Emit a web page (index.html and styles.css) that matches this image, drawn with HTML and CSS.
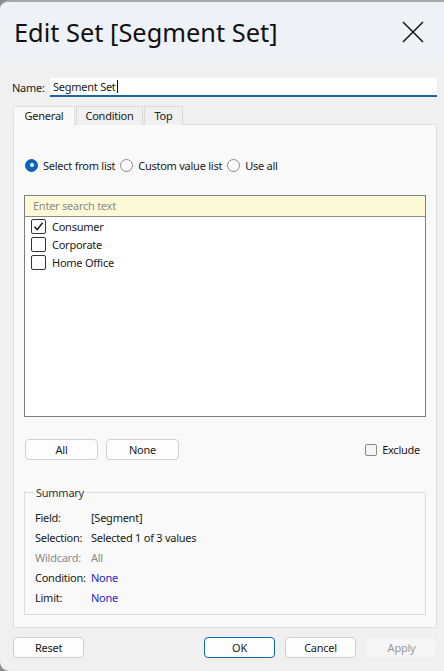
FILE: index.html
```html
<!DOCTYPE html>
<html>
<head>
<meta charset="utf-8">
<link rel="stylesheet" href="styles.css">
</head>
<body>
<div class="window">
  <div class="titlebar">
    <h1 class="title">Edit Set [Segment Set]</h1>
    <svg class="close" width="22" height="22" viewBox="0 0 22 22"><path d="M1 1L21 21M21 1L1 21" stroke="#1a1a1a" stroke-width="1.6" fill="none"/></svg>
  </div>
  <div class="content">
    <div class="name-row">
      <span class="name-label">Name:</span>
      <div class="name-input">Segment Set<span class="caret"></span></div>
    </div>
    <div class="tabs">
      <div class="tab active">General</div>
      <div class="tab">Condition</div>
      <div class="tab">Top</div>
    </div>
    <div class="panel">
      <div class="radios">
        <span class="radio checked"></span><span class="rlabel">Select from list</span>
        <span class="radio"></span><span class="rlabel">Custom value list</span>
        <span class="radio"></span><span class="rlabel">Use all</span>
      </div>
      <div class="listbox">
        <div class="search">Enter search text</div>
        <div class="items">
          <div class="item"><span class="check on"><svg width="13" height="13" viewBox="0 0 13 13"><path d="M2.5 6.8L5.2 9.6L10.6 2.8" stroke="#1a1a1a" stroke-width="1.5" fill="none"/></svg></span>Consumer</div>
          <div class="item"><span class="check"></span>Corporate</div>
          <div class="item"><span class="check"></span>Home Office</div>
        </div>
      </div>
      <div class="actions">
        <button class="btn">All</button>
        <button class="btn">None</button>
        <span class="spacer"></span>
        <span class="exclude"><span class="xbox"></span>Exclude</span>
      </div>
      <fieldset class="summary">
        <legend>Summary</legend>
        <div class="srow"><span class="sl">Field:</span><span>[Segment]</span></div>
        <div class="srow"><span class="sl">Selection:</span><span>Selected 1 of 3 values</span></div>
        <div class="srow dim"><span class="sl">Wildcard:</span><span>All</span></div>
        <div class="srow"><span class="sl">Condition:</span><span class="link">None</span></div>
        <div class="srow"><span class="sl">Limit:</span><span class="link">None</span></div>
      </fieldset>
    </div>
    <div class="footer">
      <button class="btn fbtn">Reset</button>
      <span class="spacer"></span>
      <button class="btn fbtn primary">OK</button>
      <button class="btn fbtn">Cancel</button>
      <button class="btn fbtn disabled">Apply</button>
    </div>
  </div>
</div>
</body>
</html>
```
FILE: styles.css
```css
* { box-sizing: border-box; }
html, body { margin: 0; padding: 0; }
body {
  width: 444px;
  height: 671px;
  background: #8c8c8c;
  font-family: "Segoe UI", "Noto Sans", "Open Sans", sans-serif;
  font-size: 11px;
  letter-spacing: -0.25px;
  color: #1a1a1a;
  overflow: hidden;
}
.window {
  width: 444px;
  height: 671px;
  border-top: 2px solid #a8a8a8;
  border-radius: 9px 0 0 9px;
  overflow: hidden;
  background: #f0f0f0;
  display: flex;
  flex-direction: column;
}
.titlebar {
  height: 61px;
  background: #eef2f7;
  display: flex;
  align-items: center;
  padding: 0 20px 0 14px;
}
.title {
  margin: 0;
  font-weight: normal;
  font-size: 25.4px;
  letter-spacing: 0;
  flex: 1;
  color: #111;
  padding-bottom: 2px;
}
.close { margin-top: -2px; }
.content {
  flex: 1;
  padding: 15px 7px 0 13px;
  display: flex;
  flex-direction: column;
}
.name-row {
  display: flex;
  align-items: center;
  height: 19px;
  margin-left: -1px;
}
.name-label { width: 38px; }
.name-input {
  flex: 1;
  height: 19px;
  background: #fff;
  border-bottom: 2px solid #1a64b0;
  padding: 0 3px;
  line-height: 17px;
  display: flex;
  align-items: center;
}
.caret {
  display: inline-block;
  width: 1px;
  height: 13px;
  background: #111;
  margin-left: 1px;
}
.tabs {
  display: flex;
  margin-top: 9px;
  height: 19px;
  position: relative;
  z-index: 1;
}
.tab {
  height: 19px;
  padding: 0;
  text-align: center;
  line-height: 18px;
  border: 1px solid #d9d9d9;
  border-bottom: none;
  background: #f0f0f0;
  margin-right: 1px;
}
.tab:nth-child(1) { width: 62px; }
.tab:nth-child(2) { width: 67px; }
.tab:nth-child(3) { width: 39px; }
.tab.active {
  background: #f9f9f9;
  height: 20px;
  border-color: #e0e0e0;
}
.panel {
  width: 424px;
  height: 504px;
  margin-top: -1px;
  border: 1px solid #dedede;
  background: #f9f9f9;
  padding: 0 10px;
  display: flex;
  flex-direction: column;
}
.radios {
  display: flex;
  align-items: center;
  margin-top: 33px;
  height: 14px;
}
.radio {
  width: 13px;
  height: 13px;
  border-radius: 50%;
  border: 1px solid #8a8a8a;
  background: #fbfbfb;
  margin-right: 5px;
  margin-left: 1px;
  position: relative;
}
.radio.checked {
  background: #0a64b8;
  border-color: #0a64b8;
}
.radio.checked::after {
  content: "";
  position: absolute;
  left: 3.5px;
  top: 3.5px;
  width: 4px;
  height: 4px;
  border-radius: 50%;
  background: #fff;
}
.rlabel { margin-right: 4px; }
.listbox {
  margin-top: 23px;
  width: 402px;
  height: 222px;
  border: 1px solid #7d7d7d;
  background: #fff;
}
.search {
  height: 21px;
  background: #fdfbd7;
  border-bottom: 1px solid #8a8a8a;
  color: #8a8a8a;
  padding-left: 8px;
  line-height: 20px;
}
.items { padding-top: 0; }
.item {
  height: 18px;
  display: flex;
  align-items: center;
  padding-left: 6px;
}
.check {
  width: 15px;
  height: 15px;
  border: 1px solid #333;
  border-radius: 2px;
  margin-right: 6px;
  display: flex;
  align-items: center;
  justify-content: center;
  background: #fff;
}
.actions {
  display: flex;
  align-items: center;
  margin-top: 22px;
  height: 21px;
}
.btn {
  font: inherit;
  letter-spacing: inherit;
  color: #1a1a1a;
  background: #fdfdfd;
  border: 1px solid #d0d0d0;
  border-radius: 4px;
  height: 21px;
  width: 73px;
  padding: 0;
  margin-left: 1px;
}
.actions .btn + .btn { margin-left: 8px; }
.spacer { flex: 1; }
.exclude {
  display: flex;
  align-items: center;
  margin-right: 6px;
}
.xbox {
  width: 12px;
  height: 12px;
  border: 1px solid #8a8a8a;
  border-radius: 2px;
  background: #f4f4f4;
  margin-right: 5px;
}
.summary {
  margin: 25px 0 0 0;
  width: 402px;
  height: 130px;
  border: 1px solid #dcdcdc;
  padding: 0 10px;
}
.summary legend {
  padding: 0 2px;
  margin-left: -1px;
  color: #333;
}
.srow {
  display: flex;
  height: 20px;
  align-items: center;
}
.srow:first-of-type { margin-top: 7px; }
.sl { width: 56px; }
.dim { color: #8a8a8a; }
.link { color: #1f1fc8; }
.footer {
  display: flex;
  align-items: center;
  margin-top: 9px;
}
.fbtn { width: 71px; height: 21px; margin-left: 0; }
.footer .fbtn + .fbtn { margin-left: 10px; }
.fbtn.primary { border-color: #0a64b8; }
.fbtn.disabled { color: #9a9a9a; background: #f6f6f6; border-color: #efefef; }
```
